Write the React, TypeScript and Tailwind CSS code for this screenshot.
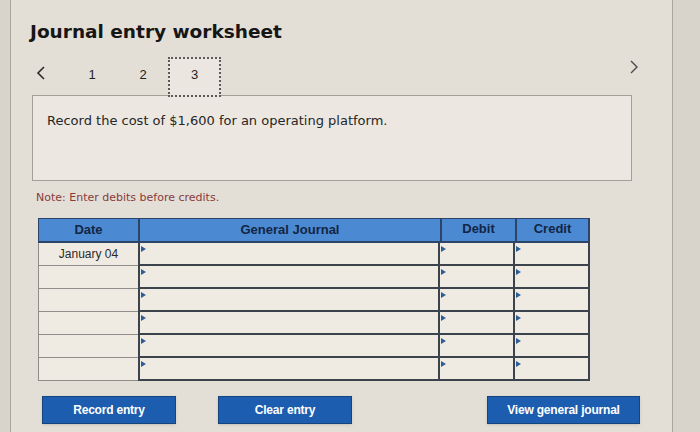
import React from 'react';

const rows = ['January 04', '', '', '', '', ''];

function Marker() {
  return (
    <span className="absolute left-[1px] top-[3px] w-0 h-0 border-t-[3px] border-b-[3px] border-l-[5px] border-t-transparent border-b-transparent border-l-[#2d5d96]" />
  );
}

function InputCell() {
  return (
    <div className="relative h-[23px] bg-[#efebe3] border-b-2 border-r-2 border-[#3b444d]">
      <Marker />
    </div>
  );
}

export default function App() {
  return (
    <div className="w-[700px] h-[432px] overflow-hidden bg-[#d8d4cc] flex" style={{ fontFamily: '"Liberation Sans", Arial, sans-serif' }}>
      <div className="w-[10px] shrink-0" />
      <div className="w-[663px] h-full shrink-0 border-x border-[#aaa69e] bg-[#e3dfd7] pl-[19px] pr-[20px] pt-[18px]">
        <h1 className="text-[18.5px] leading-[28px] font-bold text-[#161616]" style={{ fontFamily: '"DejaVu Sans", Verdana, sans-serif' }}>
          Journal entry worksheet
        </h1>

        {/* step navigation */}
        <div className="mt-[11px] h-[40px] flex items-start">
          <svg className="ml-[6px] mt-[9px]" width="10" height="14" viewBox="0 0 10 14">
            <polyline points="8,1 2,7 8,13" fill="none" stroke="#2b2b2b" strokeWidth="1.6" />
          </svg>
          <span className="ml-[36px] mt-[10px] w-[20px] text-center text-[13px] leading-[16px] text-[#222]">1</span>
          <span className="ml-[31px] mt-[10px] w-[20px] text-center text-[13px] leading-[16px] text-[#222]">2</span>
          <div className="relative z-10 ml-[15px] w-[53px] h-[40px] border-2 border-dotted border-[#5a5a5a] bg-[#ebe7e0] flex items-center justify-center pb-[4px] text-[13px] text-[#222]">
            3
          </div>
          <div className="flex-1" />
          <svg className="mt-[3px] mr-[13px]" width="9" height="14" viewBox="0 0 9 14">
            <polyline points="1,1 7,7 1,13" fill="none" stroke="#4a4a4a" strokeWidth="1.4" />
          </svg>
        </div>

        {/* instruction */}
        <div className="-mt-[2px] ml-[2px] w-[600px] h-[86px] border border-[#a3a099] bg-[#ece8e1] pl-[14px] pt-[16px]">
          <p className="text-[13px] leading-[18px] text-[#262626]" style={{ fontFamily: '"DejaVu Sans", Verdana, sans-serif' }}>
            Record the cost of $1,600 for an operating platform.
          </p>
        </div>

        <p className="mt-[10px] ml-[6px] text-[11px] leading-[14px] text-[#8a3a3a]" style={{ fontFamily: '"DejaVu Sans", Verdana, sans-serif' }}>
          Note: Enter debits before credits.
        </p>

        {/* journal table */}
        <div className="mt-[13px] ml-[8px] w-[552px] grid grid-cols-[100px_302px_75px_75px]">
          <div className="h-[25px] bg-[#4b8ad2] border-l border-t border-b-2 border-[#2c4566] flex items-center justify-center text-[13px] font-bold text-[#132544]">Date</div>
          <div className="h-[25px] bg-[#4b8ad2] border-l-2 border-t border-b-2 border-[#2c4566] flex items-center justify-center text-[13px] font-bold text-[#132544]">General Journal</div>
          <div className="h-[25px] bg-[#4b8ad2] border-l-2 border-t border-b-2 border-[#2c4566] flex items-center justify-center pb-[2px] text-[13px] font-bold text-[#132544]">Debit</div>
          <div className="h-[25px] bg-[#4b8ad2] border-x-2 border-t border-b-2 border-[#2c4566] flex items-center justify-center pb-[2px] text-[13px] font-bold text-[#132544]">Credit</div>
          {rows.map((date, i) => (
            <React.Fragment key={i}>
              <div className="h-[23px] bg-[#efebe3] border-l border-b border-[#8f8d89] flex items-center justify-center text-[12px] text-[#2a2a2a]">
                {date}
              </div>
              <div className="relative h-[23px] bg-[#efebe3] border-l-2 border-b-2 border-r-2 border-[#3b444d]">
                <Marker />
              </div>
              <InputCell />
              <InputCell />
            </React.Fragment>
          ))}
        </div>

        {/* actions */}
        <div className="mt-[15px] ml-[12px] flex">
          <button className="w-[134px] h-[28px] bg-[#1c5db0] border border-[#15457f] text-white text-[12px] font-bold tracking-[-0.2px] shadow-sm">
            Record entry
          </button>
          <button className="ml-[42px] w-[134px] h-[28px] bg-[#1c5db0] border border-[#15457f] text-white text-[12px] font-bold tracking-[-0.2px] shadow-sm">
            Clear entry
          </button>
          <button className="ml-[135px] w-[153px] h-[28px] bg-[#1c5db0] border border-[#15457f] text-white text-[12px] font-bold tracking-[-0.2px] shadow-sm">
            View general journal
          </button>
        </div>
      </div>
    </div>
  );
}
